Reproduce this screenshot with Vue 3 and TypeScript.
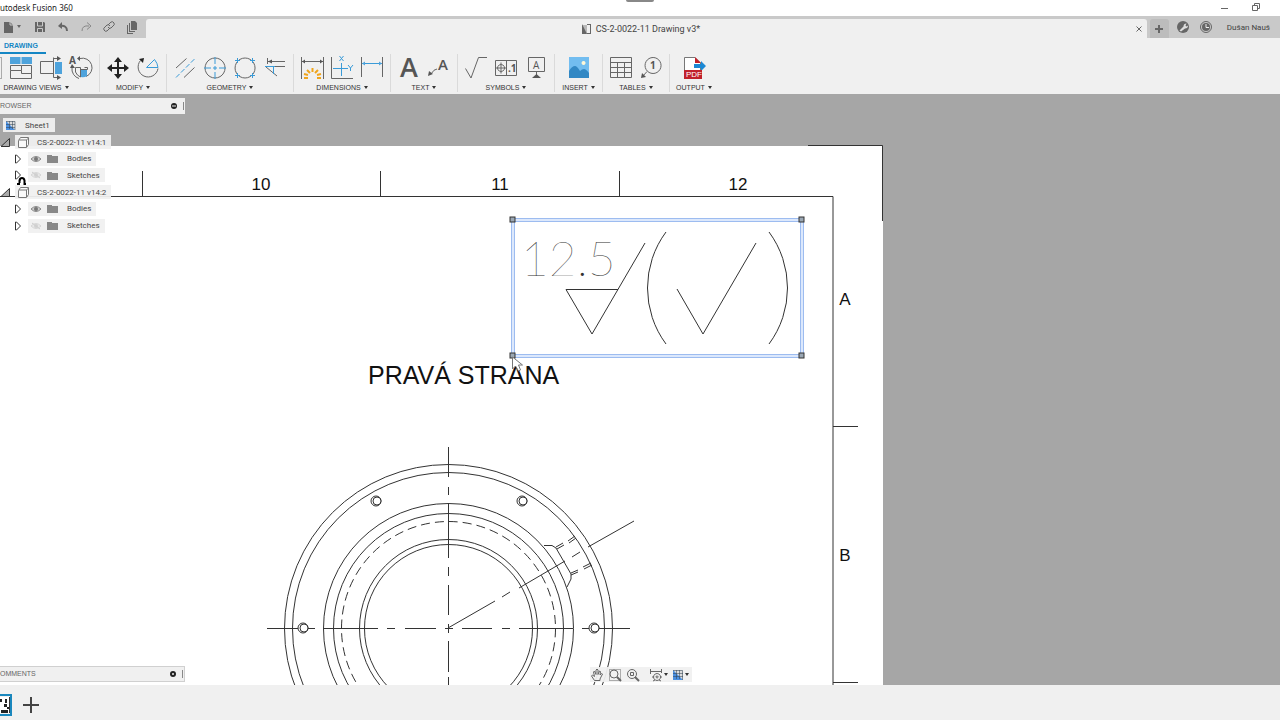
<script setup lang="ts">
interface Shape {
  d?: string
  c: string
  t?: string
  x?: number
  y?: number
}
interface Tool {
  name: string
  shapes: Shape[]
}
interface Group {
  label: string
  tools: Tool[]
}

const groups: Group[] = [
  {
    label: 'DRAWING VIEWS',
    tools: [
      { name: 'Base view', shapes: [{ d: 'M1.5 1.5h21v21h-21z', c: 'line dots' }] },
      {
        name: 'Projected view',
        shapes: [
          { d: 'M1 1h10.5v7H1zM12.5 1H23v7H12.5z', c: 'blue' },
          { d: 'M1.5 22.5V14.5H12.5V17.5H22.5V22.5zM1.5 14.5V9.5H12.5V14.5M12.5 9.5H22.5V17.5', c: 'line' },
        ],
      },
      {
        name: 'Section view',
        shapes: [
          { d: 'M14.5 5.5H1.5V17.5H14.5', c: 'line' },
          { d: 'M16 6h7v12h-7z', c: 'blue' },
          { d: 'M14.5 1.5V21.5M14.5 2.5H19M14.5 21.5H19', c: 'line' },
          { d: 'M18 0l4 2.5-4 2.5zM18 19l4 2.5-4 2.5z', c: 'dark' },
        ],
      },
      {
        name: 'Detail view',
        shapes: [
          { t: 'A', x: 0, y: 8, c: 'txt small bold' },
          { d: 'M11 2.5a9.500 9.500 0 0 1 6 18M10 22.500a10 10 0 0 1-7-11', c: 'line' },
          { d: 'M11 0v5l-3-2.500zM1 12l2-4 3 4z', c: 'dark' },
          { d: 'M6.500 11.500h5v9.500a9 9 0 0 1-5-5zM11.500 13.500h7v-2h-3', c: 'line' },
          { d: 'M12 14h6v6q-3 2-6 1z', c: 'blue' },
        ],
      },
    ],
  },
  {
    label: 'MODIFY',
    tools: [
      { name: 'Move', shapes: [{ d: 'M12 1l4 5h-3v5h5V8l5 4-5 4v-3h-5v5h3l-4 5-4-5h3v-5H6v3l-5-4 5-4v3h5V6H8z', c: 'black' }] },
      {
        name: 'Rotate',
        shapes: [
          { d: 'M4.500 4.500A10 10 0 1 0 22 12.500', c: 'line' },
          { d: 'M10.500 11.500L18.500 3.500Q21.500 7 22 11.500z', c: 'bline' },
          { d: 'M3 3l5-1-1 5z', c: 'black' },
        ],
      },
    ],
  },
  {
    label: 'GEOMETRY',
    tools: [
      {
        name: 'Centerline',
        shapes: [
          { d: 'M3 12L13.500 2.500M11 21.500L21.500 11.500', c: 'line' },
          { d: 'M3 21.500L22 2.500', c: 'bline dash' },
        ],
      },
      {
        name: 'Center mark',
        shapes: [
          { d: 'M12 2a10 10 0 1 0 .1 0', c: 'line' },
          { d: 'M12 1v7M12 10v4M12 16v7M1 12h7M10 12h4M16 12h7', c: 'bline' },
        ],
      },
      {
        name: 'Center mark pattern',
        shapes: [
          { d: 'M12 2a10 10 0 1 0 .1 0', c: 'line' },
          { d: 'M4.500 2v5M2 4.500h5M19.500 2v5M17 4.500h5M4.500 17v5M2 19.500h5M19.500 17v5M17 19.500h5', c: 'bline' },
        ],
      },
      {
        name: 'Edge extension',
        shapes: [
          { d: 'M4.500 2v6M5 5.500h17M12 10.500h10M3 11l11 9', c: 'line' },
          { d: 'M5 5.500l4-2v4z', c: 'dark' },
          { d: 'M2 10.500h10M10.500 11v7', c: 'bline' },
        ],
      },
    ],
  },
  {
    label: 'DIMENSIONS',
    tools: [
      {
        name: 'Dimension',
        shapes: [
          { d: 'M1.500 1v22M23.500 1v22M2 5.500h21', c: 'line' },
          { d: 'M2 5.500l3-2v4zM23 5.500l-3-2v4z', c: 'dark' },
          { d: 'M12.500 12v4M7 14l3 3M18 14l-3 3M4 18l4 1M21 18l-4 1M4 22h4M17 22h4', c: 'orange' },
        ],
      },
      {
        name: 'Ordinate dimension',
        shapes: [
          { d: 'M1.500 1v21.500H23', c: 'line' },
          { d: 'M11.500 7v13M3 12.500h15M9.500 0l4 5M13.500 0l-4 5M18 9l2.500 3 2.500-3M20.500 12v3', c: 'bline' },
        ],
      },
      {
        name: 'Linear dimension',
        shapes: [
          { d: 'M1.500 1v20M22.500 1v20', c: 'line' },
          { d: 'M2 7.500h20', c: 'bline' },
          { d: 'M2 7.500l3-2v4zM22 7.500l-3-2v4z', c: 'blue' },
        ],
      },
    ],
  },
  {
    label: 'TEXT',
    tools: [
      { name: 'Text', shapes: [{ t: 'A', x: 3, y: 21, c: 'txt big' }] },
      {
        name: 'Leader text',
        shapes: [
          { t: 'A', x: 11, y: 14, c: 'txt mid' },
          { d: 'M4 18q3-5 6-5', c: 'line' },
          { d: 'M1 20l1-5 4 3z', c: 'dark' },
        ],
      },
    ],
  },
  {
    label: 'SYMBOLS',
    tools: [
      { name: 'Surface texture', shapes: [{ d: 'M1.500 12.500l5.500 9.500L14.500 1.500H23', c: 'line' }] },
      {
        name: 'Feature control frame',
        shapes: [
          { d: 'M1.500 4.500h21v15h-21zM12.500 4.500v15M7 8.500a3.500 3.500 0 1 0 .1 0M7 6.500v11M2 12h10', c: 'line' },
          { t: '.1', x: 14, y: 16, c: 'txt small bold' },
        ],
      },
      {
        name: 'Datum identifier',
        shapes: [
          { d: 'M4.500 1.500h16v14h-16zM12.500 15v4', c: 'line' },
          { t: 'A', x: 9, y: 13, c: 'txt small' },
          { d: 'M8 22l4.500-4 4.500 4z', c: 'dark' },
        ],
      },
    ],
  },
  {
    label: 'INSERT',
    tools: [
      {
        name: 'Insert image',
        shapes: [
          { d: 'M2 1h20v21H2z', c: 'sky' },
          { d: 'M2 15q3-5 6-5 2 0 5 5 2-2 4-2 2 0 5 4v5H2z', c: 'hill' },
          { d: 'M16.500 5a2 2 0 1 0 .1 0', c: 'sun' },
        ],
      },
    ],
  },
  {
    label: 'TABLES',
    tools: [
      { name: 'Table', shapes: [{ d: 'M1.500 1.500h21v20h-21zM1.500 6.500h21M1.500 11.500h21M1.500 16.500h21M8.500 6.500v15M15.500 6.500v15', c: 'line' }] },
      {
        name: 'Balloon',
        shapes: [
          { d: 'M14 1.500a8 8 0 1 0 .1 0M8 15.500L4 20', c: 'line' },
          { d: 'M2 22l1-5 4 4z', c: 'dark' },
          { t: '1', x: 11, y: 13, c: 'txt small bold' },
        ],
      },
    ],
  },
  {
    label: 'OUTPUT',
    tools: [
      {
        name: 'Export PDF',
        shapes: [
          { d: 'M2.500 14V1.500H13L18.500 7v8', c: 'page' },
          { d: 'M13 1l6 6h-6z', c: 'red' },
          { d: 'M12 8h7V5l5 5-5 5v-3h-7z', c: 'arrow' },
          { d: 'M2 14h18v9H2z', c: 'red' },
          { t: 'PDF', x: 4, y: 21, c: 'pdf' },
        ],
      },
    ],
  },
]

interface Node {
  label: string
  kind: 'sheet' | 'part' | 'folder'
  hidden?: boolean
}
const nodes: Node[] = [
  { label: 'Sheet1', kind: 'sheet' },
  { label: 'CS-2-0022-11 v14:1', kind: 'part' },
  { label: 'Bodies', kind: 'folder' },
  { label: 'Sketches', kind: 'folder', hidden: true },
  { label: 'CS-2-0022-11 v14:2', kind: 'part' },
  { label: 'Bodies', kind: 'folder' },
  { label: 'Sketches', kind: 'folder', hidden: true },
]

const rings = [164, 156, 125, 115, 89, 84]
const holes = [
  [303, 533],
  [594, 533],
  [376, 406],
  [522, 406],
]
const handles = [
  [510, 122],
  [799, 122],
  [510, 258],
  [799, 258],
]
const vertical = [[352, 382], [392, 400], [408, 463], [472, 481], [490, 520], [529, 538], [546, 577], [582, 590]]
const horizontal = [[267, 298], [307, 315], [323, 378], [387, 395], [405, 436], [445, 453], [462, 492], [502, 510], [519, 573], [582, 590], [599, 630]]
const centerLines = [
  ...vertical.map(([a, b]) => `M448.5 ${a}V${b}`),
  ...horizontal.map(([a, b]) => `M${a} 533.5H${b}`),
].join('')
</script>

<template>
  <div class="app">
    <header class="titlebar">
      <span class="app-name">utodesk Fusion 360</span>
      <span class="grip"></span>
      <div class="window-buttons">
        <button aria-label="Minimize"><svg width="12" height="12"><path d="M3 6.500h7" class="line" /></svg></button>
        <button aria-label="Restore"><svg width="12" height="12"><path d="M2.500 3.500h5v5h-5zM4.500 3V1.500h5v5H8" class="line" /></svg></button>
      </div>
    </header>

    <div class="tabbar">
      <div class="quick">
        <button aria-label="File"><svg width="20" height="14"><path d="M4 2h6l3 3v8H4z" class="gray" /><path d="M10 2v3h3" class="cut" /><path d="M17 5h4l-2 3z" class="gray" /></svg></button>
        <button aria-label="Save"><svg width="14" height="14"><path d="M2 2h9l1 1v9H2z" class="gray" /><path d="M4.500 2v4h5V2M4.500 12V8.500h5V12" class="cut" /></svg></button>
        <button aria-label="Undo"><svg width="14" height="14"><path d="M4 6q7-1 7 5" class="thick" /><path d="M2 6l4-4v7z" class="gray" /></svg></button>
        <button aria-label="Redo"><svg width="14" height="14"><path d="M10 6q-7-1-7 5" class="pale" /><path d="M8 2.500l4 3.500-4 3.500" class="pale" /></svg></button>
        <button aria-label="Link"><svg width="14" height="14"><path d="M6 5l3-3q2-1 3 1t-1 3L9 8q-2 1-3-1M8 8l-3 3q-2 1-3-1t1-3l2-2q2-1 3 1" class="line" /></svg></button>
        <button aria-label="Documents"><svg width="14" height="14"><path d="M6 1h4l2 2v7H6zM4 3v9h6v-1H5V3zM2 5v9h6v-1H3V5z" class="gray" /></svg></button>
      </div>
      <div class="doc-tab">
        <span class="doc-title">
          <svg width="12" height="12"><path d="M1 1l5 10H1z" class="gray" /><path d="M1 2h5v9H1z" class="half" /><path d="M9.500 1v10M6 1.500h4M6 10.500h4" class="line" /></svg>
          CS-2-0022-11 Drawing v3*
        </span>
        <button class="close" aria-label="Close tab"><svg width="8" height="8"><path d="M1.500 1.500l5 5M6.500 1.500l-5 5" class="line" /></svg></button>
      </div>
      <div class="account">
        <button class="new-tab" aria-label="New tab"><svg width="12" height="12"><path d="M6 2v8M2 6h8" class="thick" /></svg></button>
        <button aria-label="Extensions"><svg width="12" height="12"><circle cx="6" cy="6" r="6" class="gray" /><path d="M2.500 9.500l4-4q0-3 3-3l-1 2 1 1 1.500-1q0 3-3 3l-4 3" class="white" /></svg></button>
        <button aria-label="Job status"><svg width="12" height="12"><circle cx="6" cy="6" r="5.500" class="line" /><circle cx="6" cy="6" r="4" class="gray" /><path d="M6 3v3.500h3" class="wline" /></svg></button>
        <button class="user">Dušan Nauš</button>
      </div>
    </div>

    <nav class="ribbon">
      <a href="#" class="ribbon-tab">DRAWING</a>
      <div class="groups">
        <section v-for="g in groups" :key="g.label" class="group">
          <div class="tools">
            <button v-for="tool in g.tools" :key="tool.name" :aria-label="tool.name">
              <svg width="24" height="24" viewBox="0 0 24 24">
                <template v-for="(s, i) in tool.shapes" :key="i">
                  <text v-if="s.t" :x="s.x" :y="s.y" :class="s.c">{{ s.t }}</text>
                  <path v-else :d="s.d" :class="s.c" />
                </template>
              </svg>
            </button>
          </div>
          <button class="group-label">{{ g.label }}<i class="caret"></i></button>
        </section>
      </div>
    </nav>

    <main class="canvas">
      <svg class="drawing" width="884" height="590" viewBox="0 0 884 590">
        <rect x="0" y="51" width="883" height="539" fill="#fff" />
        <path d="M808 50.500H882.500V126" class="edge" />
        <path d="M0 101.500H833V590M142.500 76V101M380.500 76V101M619.500 76V101M833 331.500H858M833 587.500H858" class="ink" />
        <g class="zone">
          <text x="261" y="95">10</text>
          <text x="500" y="95">11</text>
          <text x="738" y="95">12</text>
          <text x="845" y="210">A</text>
          <text x="845" y="466">B</text>
        </g>
        <text x="368" y="289" class="view-title">PRAVÁ STRANA</text>

        <circle v-for="r in rings" :key="r" cx="448.5" cy="533.5" :r="r" class="ink" />
        <circle cx="448.5" cy="533.5" r="107" class="ink hidden-edge" />
        <path :d="centerLines" class="ink" />
        <template v-for="(h, i) in holes" :key="i">
          <circle :cx="h[0]" :cy="h[1]" r="5" class="hole" />
          <circle :cx="h[0] + 1" :cy="h[1]" r="4" class="hole" />
        </template>
        <path d="M448 533L495 506M502 502L510 497M519 493L565 466M572 462L580 457M588 452L634 426" class="ink" />
        <path d="M544 450.500H552L556 453 571 479V484L567 492M556 452l7-4M557 454l7-4M568 446l7-5M569 448l7-5M571 478l7-3M571 480l7-3M583 472l8-4M584 474l8-4" class="ink" />

        <rect x="513" y="125" width="289" height="136" class="selection-wide" />
        <rect x="513" y="125" width="289" height="136" class="selection-core" />
        <text x="521" y="181" class="roughness">12.5</text>
        <path d="M618 194.500H566L592 239 645 148M677 194L703 239 756 148M666 137A94 94 0 0 0 666 249M769 137A94 94 0 0 1 769 249" class="ink" />
        <rect v-for="(h, i) in handles" :key="'s' + i" :x="h[0]" :y="h[1]" width="5" height="5" class="handle" />
        <path d="M512.500 262v12l3-3 3 5 2-1-2-5h4z" class="cursor" />
      </svg>

      <aside class="browser">
        <div class="panel-head">
          <span>ROWSER</span>
          <button aria-label="Collapse browser"><svg width="8" height="8"><circle cx="4" cy="4" r="3" class="black" /><path d="M2 4h4" class="wline" /></svg></button>
        </div>
        <ul class="tree">
          <li v-for="(n, i) in nodes" :key="i" :class="n.kind">
            <svg v-if="n.kind === 'part'" class="twist" width="10" height="10"><path d="M1 9.500L9.500 1.500v8z" class="open" /></svg>
            <svg v-if="n.kind === 'folder'" class="twist" width="8" height="10"><path d="M1.500 1v8h1l4-4-4-4z" class="ink" /></svg>
            <span class="chip">
              <svg v-if="n.kind === 'sheet'" width="10" height="10"><path d="M1 1h9v9H1z" class="sheet-bg" /><path d="M1 1l9 9H1z" class="sheet-blue" /><path d="M1 1.500h9v8.500M4.500 1v8M7.500 1v8M1 4.500h9M1 7.500h9" class="grid" /></svg>
              <svg v-else-if="n.kind === 'part'" width="12" height="12"><path d="M1.500 4.500l2-3h8v7l-2 3h-8zM2 4h7.500v7M9.500 4l2-2" class="cube" /></svg>
              <template v-else>
                <svg width="12" height="8" :class="{ faint: n.hidden }"><path d="M1 4q5-5 10 0-5 5-10 0z" class="eye" /><circle cx="6" cy="4" r="2" class="eye-dot" /><path v-if="n.hidden" d="M2 1l8 6" class="line" /></svg>
                <svg width="12" height="9"><path d="M0 1h5v1h6v7H0z" class="folder-icon" /></svg>
              </template>
              <span>{{ n.label }}</span>
            </span>
          </li>
        </ul>
        <svg class="busy" width="10" height="10"><path d="M0 8h3M2.500 7V4.500Q3 2 5 2t2.500 2.500V8H9M2 3.500h2" class="busy-line" /></svg>
      </aside>

      <aside class="comments panel-head">
        <span>OMMENTS</span>
        <button aria-label="Expand comments"><svg width="8" height="8"><circle cx="4" cy="4" r="3" class="black" /><path d="M3 4h2M4 3v2" class="wline" /></svg></button>
      </aside>

      <div class="navbar">
        <button aria-label="Pan"><svg width="14" height="14"><path d="M4.500 12.500L1.500 8l1-1 2 1.500L3.500 4l1-1L6 6.500V2l1-1 1 1v4.500L9.500 3l1 .5L10 7l1.500-1.500 1 .5-2.500 5v1.500z" class="line" /></svg></button>
        <button aria-label="Zoom window"><svg width="14" height="14"><path d="M1.500 1.500h11v11h-11z" class="line dots" /><circle cx="6" cy="6" r="4" class="line" /><path d="M9 9l4 4" class="thick" /></svg></button>
        <button aria-label="Fit"><svg width="14" height="14"><circle cx="6" cy="6" r="4.500" class="line" /><path d="M4.500 4.500h3v3h-3z" class="line" /><path d="M9 9l4 4" class="thick" /></svg></button>
        <button class="with-caret" aria-label="Display settings"><svg width="14" height="14"><path d="M1.500 1v5M12.500 1v4M1.500 3.500h11M8 5.500a3.500 3.500 0 1 0 .1 0M8 8a1 1 0 1 0 .1 0M3 9h2M11 9h2M4 13l2-1M12 13l-2-1" class="line" /></svg><i class="caret"></i></button>
        <button class="with-caret" aria-label="Grid settings"><svg width="12" height="12"><path d="M1 1h10v10H1z" class="sheet-bg" /><path d="M1 1l10 10H1z" class="sheet-blue" /><path d="M1 1.500h9.500V11M4.500 1v9M7.500 1v9M1 4.500h10M1 7.500h10" class="grid" /></svg><i class="caret"></i></button>
      </div>
    </main>

    <footer class="sheets">
      <button class="thumb" aria-label="Sheet 1"><svg width="10" height="18"><path d="M0 1h9v16H0z" fill="#fff" /><path d="M0 3h2v3H0zM5 3h2v4H5zM4 8h3v3H4zM1 14h7v3H1zM7 11h2v2H7z" class="black" /><path d="M9.500 1v16" class="ink" /></svg></button>
      <button aria-label="Add sheet"><svg width="16" height="16"><path d="M8 0v16M0 8h16" class="plus" /></svg></button>
    </footer>
  </div>
</template>

<style>
body {
  margin: 0;
  overflow: hidden;
}
</style>

<style scoped>
.app {
  display: flex;
  flex-direction: column;
  height: 100vh;
  font-family: Roboto, "Liberation Sans", sans-serif;
  font-size: 8px;
  color: #444;
  background: #f0f0f0;
}
button {
  display: flex;
  align-items: center;
  justify-content: center;
  flex: none;
  padding: 0;
  border: 0;
  background: none;
  color: inherit;
  font: inherit;
}
svg {
  display: block;
  flex: none;
  overflow: visible;
}
.titlebar {
  display: flex;
  justify-content: space-between;
  height: 16px;
  flex: none;
  position: relative;
  background: #fff;
}
.app-name {
  font: 8px/16px "Noto Sans", sans-serif;
  color: #222;
}
.grip {
  position: absolute;
  left: 50%;
  top: 0;
  width: 28px;
  height: 2px;
  margin-left: -14px;
  border-radius: 0 0 3px 3px;
  background: #888;
}
.window-buttons {
  display: flex;
  align-items: center;
  gap: 20px;
  padding-right: 18px;
}
.tabbar {
  display: flex;
  flex: none;
  height: 22px;
  background: #c9c9c9;
}
.quick {
  display: flex;
  align-items: center;
  gap: 9px;
  width: 146px;
}
.quick button:first-child {
  margin-right: 4px;
}
.doc-tab {
  display: flex;
  flex: 1;
  align-items: center;
  margin-top: 3px;
  padding-right: 4px;
  border-radius: 3px 3px 0 0;
  background: #f0f0f0;
}
.doc-title {
  display: flex;
  flex: 1;
  align-items: center;
  justify-content: center;
  gap: 3px;
  font-size: 9px;
}
.account {
  display: flex;
  align-items: center;
  gap: 11px;
  padding: 0 10px 0 3px;
}
.new-tab {
  width: 19px;
  height: 19px;
  align-self: end;
  margin-right: 0;
  border-radius: 3px 3px 0 0;
  background: #bcbcbc;
}
.user {
  margin-left: 4px;
}
.new-tab + button {
  margin-left: -3px;
}
.ribbon {
  flex: none;
  height: 56px;
  border-bottom: 1px solid #a6a6a6;
}
.ribbon-tab {
  display: block;
  width: 42px;
  height: 12px;
  padding: 2px 0 0 4px;
  border-bottom: 2px solid #1486c4;
  font: 700 7px/12px "Liberation Sans", sans-serif;
  color: #1486c4;
  text-decoration: none;
  white-space: nowrap;
}
.groups {
  display: flex;
  height: 38px;
  margin-left: -27px;
}
.group {
  display: flex;
  flex-direction: column;
  align-items: center;
  box-sizing: border-box;
  min-width: 48px;
  padding: 0 3px;
  border-right: 1px solid #dadada;
}
.group:last-child {
  border: 0;
}
.tools {
  display: flex;
}
.tools button {
  width: 30px;
  height: 28px;
}
.group-label {
  height: 11px;
  font: 7px/11px "Liberation Sans", sans-serif;
  color: #333;
  white-space: nowrap;
}
.caret {
  margin-left: 3px;
  border: 2px solid transparent;
  border-top: 3px solid #333;
  border-bottom: 0;
}
.line {
  fill: none;
  stroke: #666;
}
.pale {
  fill: none;
  stroke: #888;
}
.dots {
  stroke-dasharray: 1 1;
}
.bline {
  fill: none;
  stroke: #3a9bd8;
}
.dash {
  stroke-dasharray: 5 2;
}
.blue {
  fill: #4ea3dc;
}
.dark {
  fill: #555;
}
.black {
  fill: #222;
}
.gray {
  fill: #666;
}
.half {
  fill: #6666;
}
.cut {
  fill: none;
  stroke: #c9c9c9;
}
.thick {
  fill: none;
  stroke: #666;
  stroke-width: 2;
}
.white {
  fill: #ddd;
}
.wline {
  fill: none;
  stroke: #eee;
}
.orange {
  fill: none;
  stroke: #f0a51c;
  stroke-width: 2;
}
.txt {
  fill: #555;
  font-family: "Open Sans", sans-serif;
}
.small {
  font-size: 10px;
}
.bold {
  font-weight: 700;
}
.mid {
  font-size: 15px;
  font-weight: 600;
}
.big {
  font-size: 27px;
  font-weight: 600;
}
.sky {
  fill: #72bdf0;
}
.hill {
  fill: #3288c4;
}
.sun {
  fill: #fff8d8;
}
.page {
  fill: #fff;
  stroke: #777;
}
.red {
  fill: #c1212b;
}
.arrow {
  fill: #1c88d4;
}
.pdf {
  fill: #fff;
  font-family: "Liberation Sans", sans-serif;
  font-size: 8px;
}
.canvas {
  position: relative;
  flex: 1;
  min-height: 0;
  overflow: hidden;
  background: #a6a6a6;
}
.drawing {
  position: absolute;
  left: 0;
  top: 0;
}
.ink {
  fill: none;
  stroke: #333;
}
.edge {
  fill: none;
  stroke: #333;
}
.hidden-edge {
  stroke-dasharray: 9 5;
}
.zone {
  font: 17px "Liberation Sans", sans-serif;
  text-anchor: middle;
  fill: #111;
}
.view-title {
  font: 25px "Liberation Sans", sans-serif;
  fill: #111;
}
.hole {
  fill: #fff;
  stroke: #333;
}
.selection-wide {
  fill: none;
  stroke: #9dbcf0;
  stroke-width: 4;
}
.selection-core {
  fill: none;
  stroke: #dce8fc;
  stroke-width: 2;
}
.roughness {
  font: 100 48px Lato, Roboto, sans-serif;
  fill: #333;
}
.handle {
  fill: #9aa7b4;
  stroke: #333;
}
.cursor {
  fill: #fff;
  stroke: #777;
}
.browser {
  position: relative;
  width: 185px;
  padding-top: 3px;
}
.panel-head {
  display: flex;
  align-items: center;
  justify-content: space-between;
  box-sizing: border-box;
  width: 185px;
  height: 16px;
  padding-right: 7px;
  background: #f0f0f0;
  color: #666;
  font: 7px/14px "Liberation Sans", sans-serif;
}
.panel-head button {
  position: relative;
}
.panel-head button::after {
  content: "";
  position: absolute;
  right: -6px;
  width: 1px;
  height: 8px;
  background: #888;
}
.tree {
  display: grid;
  grid-template-rows: repeat(7, 1fr);
  height: 117px;
  margin: 3px 0 0;
  padding: 0;
  list-style: none;
}
.tree li {
  display: flex;
  align-items: center;
}
.sheet {
  padding-left: 3px;
}
.folder {
  padding-left: 14px;
}
.part .twist {
  margin-right: 5px;
}
.folder .twist {
  margin-right: 6px;
}
.chip {
  display: flex;
  align-items: center;
  box-sizing: border-box;
  height: 14px;
  padding: 0 5px 0 2px;
  background: #f0f0f0f0;
  white-space: nowrap;
}
.sheet .chip span {
  margin-left: 10px;
}
.part .chip span,
.folder .chip span {
  margin-left: 8px;
}
.chip svg + svg {
  margin-left: 5px;
}
.open {
  fill: #aaa;
  stroke: #333;
}
.cube {
  fill: #fafafa;
  stroke: #777;
}
.eye {
  fill: #ccc;
  stroke: #888;
}
.eye-dot {
  fill: #777;
}
.faint {
  opacity: 0.25;
}
.folder-icon {
  fill: #888;
}
.sheet-bg {
  fill: #ddd;
}
.sheet-blue {
  fill: #4a8fe0;
}
.grid {
  fill: none;
  stroke: #3458;
}
.busy {
  position: absolute;
  left: 17px;
  top: 81px;
}
.busy-line {
  fill: #fff;
  stroke: #000;
  stroke-width: 2;
}
.comments {
  position: absolute;
  left: 0;
  bottom: 3px;
  border: 1px solid #d0d0d0;
  border-left: 0;
}
.navbar {
  position: absolute;
  left: 590px;
  bottom: 3px;
  display: flex;
  align-items: center;
  gap: 4px;
  height: 15px;
  padding: 0 3px 0 0;
  background: #f0f0f0f0;
}
.with-caret {
  margin-left: 5px;
}
.with-caret + .with-caret {
  margin-left: 0;
}
.with-caret .caret {
  margin-left: 1px;
}
.sheets {
  display: flex;
  align-items: center;
  gap: 11px;
  flex: none;
  height: 35px;
  padding-top: 4px;
  box-sizing: border-box;
}
.thumb {
  border: 2px solid #1a87bd;
  border-left: 0;
}
.plus {
  stroke: #444;
  stroke-width: 2;
}
</style>
